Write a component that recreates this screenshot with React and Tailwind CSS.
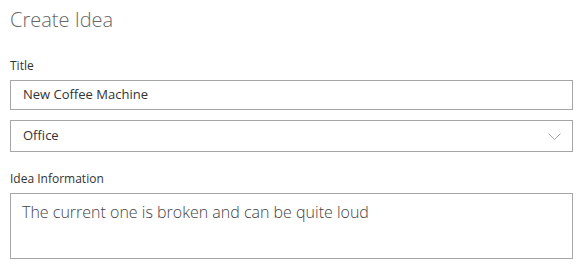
export default function App() {
  return (
    <div className="w-[583px] h-[267px] bg-white px-[10px] pt-[6px] font-['Open_Sans','Noto_Sans',sans-serif] text-[#333]">
      <h1 className="text-[20px] font-light leading-[28px] text-[#666]">Create Idea</h1>

      <label className="block mt-[24px] text-[12px] leading-[16px]">Title</label>
      <div className="mt-[6px] h-[30px] w-[563px] border border-[#a6a6a6] flex items-center px-[12px] text-[13px]">
        New Coffee Machine
      </div>

      <div className="mt-[10px] h-[32px] w-[563px] border border-[#a6a6a6] flex items-center justify-between pl-[12px] pr-[11px] text-[13px]">
        <span>Office</span>
        <svg width="13" height="7" viewBox="0 0 13 7" fill="none">
          <path d="M0.5 0.5 L6.5 6.5 L12.5 0.5" stroke="#a6a6a6" strokeWidth="1" />
        </svg>
      </div>

      <label className="block mt-[19px] text-[12px] leading-[16px]">Idea Information</label>
      <div className="mt-[6px] h-[66px] w-[563px] border border-[#a6a6a6] px-[11px] pt-[8px] text-[16px] font-light leading-[20px] text-[#444]">
        The current one is broken and can be quite loud
      </div>
    </div>
  );
}
